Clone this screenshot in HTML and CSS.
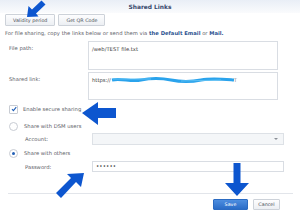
FILE: index.html
```html
<!DOCTYPE html>
<html>
<head>
<meta charset="utf-8">
<link rel="stylesheet" href="styles.css">
</head>
<body>
<div class="dlg">
  <div class="hdr"><span class="title">Shared Links</span></div>
  <div class="tools">
    <button class="btn">Validity period</button>
    <button class="btn">Get QR Code</button>
  </div>
  <p class="desc">For file sharing, copy the links below or send them via <b class="lnk">the Default Email</b> or <b class="lnk">Mail.</b></p>
  <div class="row r-path">
    <span class="lbl">File path:</span>
    <div class="box">/web/TEST file.txt</div>
  </div>
  <div class="row r-link">
    <span class="lbl">Shared link:</span>
    <div class="box">https://<svg class="scribble" width="124" height="6" viewBox="0 0 124 6"><path d="M1 3 C10 1 20 5 30 3 S50 1 60 3 S80 5 90 3 S110 2 123 3" stroke="#2aa3ec" stroke-width="3" fill="none"/><path d="M2 2 L40 2 M70 4 L110 3" stroke="#5cc0f4" stroke-width="1" fill="none"/></svg><span class="tail">T</span></div>
  </div>
  <div class="opt r-check">
    <span class="chk"><svg width="8" height="8" viewBox="0 0 8 8"><path d="M1.3 4.2 L3.2 6.2 L7 1.4" stroke="#1f5fb8" stroke-width="1.4" fill="none"/></svg></span>
    <span class="olbl">Enable secure sharing</span>
  </div>
  <div class="opt r-dsm">
    <span class="rad"></span>
    <span class="olbl">Share with DSM users</span>
  </div>
  <div class="sub r-acct">
    <span class="slbl">Account:</span>
    <div class="sel"><span class="caret"></span></div>
  </div>
  <div class="opt r-others">
    <span class="rad on"></span>
    <span class="olbl">Share with others</span>
  </div>
  <div class="sub r-pwd">
    <span class="slbl">Password:</span>
    <div class="inp">••••••</div>
  </div>
  <div class="sep"></div>
  <div class="foot">
    <button class="btn save">Save</button>
    <button class="btn cancel">Cancel</button>
  </div>

  <svg class="arrow a1" width="24" height="20" viewBox="0 0 24 20"><path d="M3 17 L4.5 6 L8 9.5 L17.5 0.5 L21.5 4.5 L12 13.5 L14.5 16.5 Z" fill="#0d56cf"/></svg>
  <svg class="arrow a2" width="36" height="26" viewBox="0 0 36 26"><path d="M1 12 L17 1 L17 7 L35 7 L35 17 L17 17 L17 24 Z" fill="#0d56cf"/></svg>
  <svg class="arrow a3" width="32" height="28" viewBox="0 0 32 28"><path d="M30 1 L27 15 L22 10 L7 26 L2 21 L17 6 L13 2 Z" fill="#0d56cf"/></svg>
  <svg class="arrow a4" width="26" height="34" viewBox="0 0 26 34"><path d="M9.5 0 L16.5 0 L16.5 20 L25 20 L13 33 L1 20 L9.5 20 Z" fill="#0d56cf"/></svg>
</div>
</body>
</html>
```
FILE: styles.css
```css
html, body { margin: 0; padding: 0; background: #fff; }
.dlg {
  position: relative;
  width: 300px;
  height: 214px;
  overflow: hidden;
  font-family: "DejaVu Sans", Verdana, sans-serif;
  font-size: 5.25px;
  color: #5d6168;
  background: #fff;
}
.hdr {
  height: 13px;
  display: flex;
  align-items: center;
  justify-content: center;
  background: linear-gradient(#e9eef6, #fafbfd);
}
.title { font-weight: bold; font-size: 5.9px; color: #36486b; }
.tools { display: flex; gap: 3px; padding-left: 5px; margin-top: 1px; }
.btn {
  font-family: "DejaVu Sans", Verdana, sans-serif;
  font-size: 4.8px;
  color: #4a4f57;
  height: 12px;
  padding: 0 7px;
  border: 1px solid #cdd2d9;
  border-radius: 1px;
  background: linear-gradient(#fdfdfe, #eceff3);
  margin: 0;
}
.desc { margin: 3px 0 0 5px; line-height: 8px; height: 8px; white-space: nowrap; }
.lnk { color: #2b5290; }
.row { display: flex; margin-left: 9px; }
.lbl { width: 79px; padding-top: 5px; line-height: 5px; }
.box {
  width: 190px;
  border: 1px solid #d9dde3;
  padding: 4px 0 0 3px;
  box-sizing: border-box;
  line-height: 6px;
  display: flex;
  align-self: flex-start;
  height: 29px;
  align-items: flex-start;
  color: #444;
}
.r-path { margin-top: 4px; }
.r-link { margin-top: 2px; }
.r-link .box { height: 28px; }
.tail { color: #888; margin-left: -1px; }
.opt { display: flex; align-items: center; height: 8px; margin-left: 9px; }
.r-check { margin-top: 5px; }
.r-dsm { margin-top: 9px; }
.r-others { margin-top: 4px; }
.chk {
  width: 7px; height: 7px;
  border: 1px solid #c8ccd3;
  background: #fff;
  display: flex;
  align-items: center;
  justify-content: center;
  margin-right: 5px;
  border-radius: 1px;
}
.chk svg { margin-top: -1px; margin-left: 1px; }
.rad {
  width: 7px; height: 7px;
  border: 1px solid #c8ccd3;
  border-radius: 50%;
  background: #fff;
  margin-right: 6px;
  display: flex; align-items: center; justify-content: center;
}
.rad.on::after {
  content: "";
  width: 3px; height: 3px;
  border-radius: 50%;
  background: #2360b6;
}
.olbl { line-height: 8px; }
.sub { display: flex; align-items: center; margin-left: 25px; }
.slbl { width: 67px; }
.r-acct { margin-top: 3px; }
.r-pwd { margin-top: 4px; }
.sel {
  width: 192px; height: 12px;
  box-sizing: border-box;
  border: 1px solid #dde1e6;
  background: #f4f6f8;
  position: relative;
}
.caret {
  position: absolute;
  right: 5px; top: 4px;
  width: 0; height: 0;
  border-left: 2px solid transparent;
  border-right: 2px solid transparent;
  border-top: 2px solid #8b9097;
}
.inp {
  width: 192px; height: 11px;
  box-sizing: border-box;
  border: 1px solid #d9dde3;
  background: #fff;
  padding-left: 3px;
  line-height: 9px;
  font-size: 5.5px;
  color: #333;
  letter-spacing: 0.1px;
}
.sep { margin: 21px 7px 0 8px; height: 1px; background: #e2e5ea; }
.foot { display: flex; justify-content: flex-end; gap: 5px; margin-top: 5px; padding-right: 20px; }
.foot .btn { height: 11px; }
.save {
  width: 35px;
  color: #fff;
  border-color: #2b6bc2;
  background: linear-gradient(#4d8ee0, #2a6cc7);
}
.cancel { width: 27px; padding: 0; }
.arrow { position: absolute; }
.a1 { left: 24px; top: 0px; }
.a2 { left: 81px; top: 101px; }
.a3 { left: 54px; top: 172px; }
.a4 { left: 224px; top: 163px; }
```
